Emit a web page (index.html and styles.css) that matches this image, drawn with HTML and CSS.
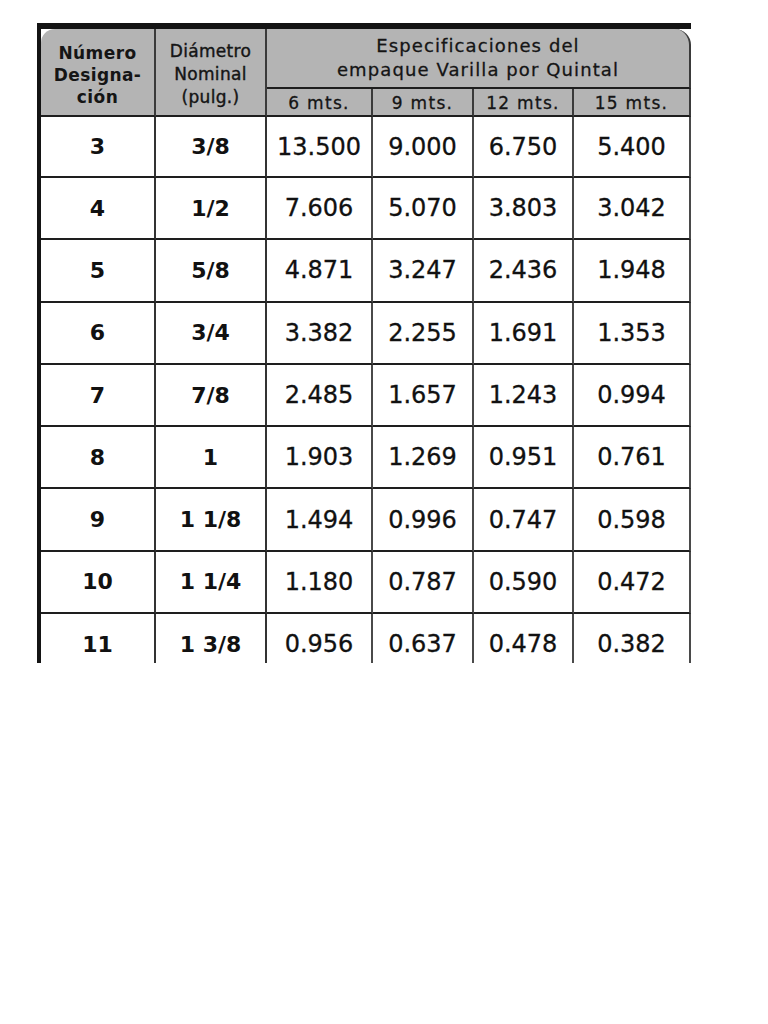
FILE: index.html
```html
<!DOCTYPE html>
<html lang="es">
<head>
<meta charset="utf-8">
<title>Especificaciones Varilla</title>
<link rel="stylesheet" href="styles.css">
</head>
<body>
<div class="sheet">
  <table class="spec">
    <colgroup>
      <col class="c1"><col class="c2"><col class="c3"><col class="c4"><col class="c5"><col class="c6">
    </colgroup>
    <thead>
      <tr class="h1">
        <th rowspan="2" class="hd-num">Número<br>Designa-<br>ción</th>
        <th rowspan="2" class="hd-dia">Diámetro<br>Nominal<br>(pulg.)</th>
        <th colspan="4" class="hd-spec">Especificaciones del<br>empaque Varilla por Quintal</th>
      </tr>
      <tr class="h2">
        <th>6 mts.</th>
        <th>9 mts.</th>
        <th>12 mts.</th>
        <th class="last">15 mts.</th>
      </tr>
    </thead>
    <tbody>
      <tr class="first"><td class="k">3</td><td class="k">3/8</td><td>13.500</td><td>9.000</td><td>6.750</td><td>5.400</td></tr>
      <tr><td class="k">4</td><td class="k">1/2</td><td>7.606</td><td>5.070</td><td>3.803</td><td>3.042</td></tr>
      <tr><td class="k">5</td><td class="k">5/8</td><td>4.871</td><td>3.247</td><td>2.436</td><td>1.948</td></tr>
      <tr><td class="k">6</td><td class="k">3/4</td><td>3.382</td><td>2.255</td><td>1.691</td><td>1.353</td></tr>
      <tr><td class="k">7</td><td class="k">7/8</td><td>2.485</td><td>1.657</td><td>1.243</td><td>0.994</td></tr>
      <tr><td class="k">8</td><td class="k">1</td><td>1.903</td><td>1.269</td><td>0.951</td><td>0.761</td></tr>
      <tr><td class="k">9</td><td class="k">1 1/8</td><td>1.494</td><td>0.996</td><td>0.747</td><td>0.598</td></tr>
      <tr><td class="k">10</td><td class="k">1 1/4</td><td>1.180</td><td>0.787</td><td>0.590</td><td>0.472</td></tr>
      <tr><td class="k">11</td><td class="k">1 3/8</td><td>0.956</td><td>0.637</td><td>0.478</td><td>0.382</td></tr>
    </tbody>
  </table>
</div>
</body>
</html>
```

FILE: styles.css
```css
html, body {
  margin: 0;
  padding: 0;
  background: #ffffff;
}

body {
  font-family: "DejaVu Sans", Verdana, sans-serif;
  color: #111111;
}

.sheet {
  box-sizing: border-box;
  margin: 23px 0 0 37px;
  width: 654px;
  height: 640px;
  overflow: hidden;
  border-top: 6px solid #141414;
  border-left: 4px solid #141414;
  background: #ffffff;
}

.spec {
  table-layout: fixed;
  border-collapse: separate;
  border-spacing: 0;
  width: 650px;
}

.c1 { width: 115px; }
.c2 { width: 111px; }
.c3 { width: 106px; }
.c4 { width: 101px; }
.c5 { width: 100px; }
.c6 { width: 117px; }

.spec th,
.spec td {
  padding: 0;
  text-align: center;
  vertical-align: middle;
  border-right: 2px solid #3a3a3a;
  border-bottom: 2px solid #1e1e1e;
}

.spec th {
  background: #b4b4b4;
  font-weight: normal;
  color: #151515;
}

.hd-num {
  font-weight: bold !important;
  font-size: 17px;
  line-height: 22px;
  letter-spacing: 0.4px;
  border-top-left-radius: 14px;
  padding-top: 6px !important;
}

.hd-dia {
  font-size: 17px;
  line-height: 23px;
  letter-spacing: 0.3px;
  padding-top: 4px !important;
  -webkit-text-stroke: 0.4px #151515;
}

.hd-spec {
  height: 58px;
  font-size: 18px;
  line-height: 24px;
  letter-spacing: 1.1px;
  border-top-right-radius: 16px;
  -webkit-text-stroke: 0.3px #151515;
}

.h2 th {
  height: 24px;
  font-size: 17px;
  line-height: 20px;
  letter-spacing: 1.3px;
  padding-top: 2px;
  -webkit-text-stroke: 0.3px #151515;
}

.spec td {
  height: 60.3px;
  font-size: 24px;
  border-right-color: #4a4a4a;
  -webkit-text-stroke: 0.3px #111111;
}

.spec tr.first td {
  height: 59px;
}

.spec td.k {
  font-weight: bold;
  font-size: 22px;
  border-right-color: #333333;
  -webkit-text-stroke: 0;
}
```
